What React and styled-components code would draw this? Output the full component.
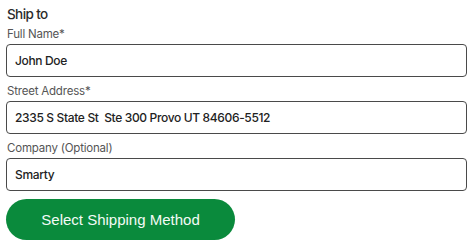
import React, { useState } from "react";
import styled, { createGlobalStyle } from "styled-components";

const GlobalStyle = createGlobalStyle`
    body {
        margin: 0;
        background: #fff;
        font-family: Inter, "Open Sans", sans-serif;
    }
`

const Form = styled.form`
    width: 474px;
    box-sizing: border-box;
    padding: 4px 7px 0 6px;
    display: flex;
    flex-direction: column;
`
const Heading = styled.div`
    font-size: 13.5px;
    line-height: 20px;
    height: 20px;
    color: #2b2b2b;
    font-weight: 500;
    letter-spacing: -0.6px;
    padding-left: 1px;
    margin-bottom: 3px;
`
const Field = styled.label`
    display: flex;
    flex-direction: column;
    gap: 3px;
    margin-bottom: 7px;
`
const LabelText = styled.span`
    font-size: 11.5px;
    line-height: 14px;
    color: #555;
    letter-spacing: -0.2px;
    padding-left: 1px;
`
const Input = styled.input`
    box-sizing: border-box;
    height: 33px;
    width: 100%;
    border: 1.5px solid #4a4a4a;
    border-radius: 4px;
    padding: 0 8px;
    font-family: Inter, "Open Sans", sans-serif;
    font-size: 12px;
    font-weight: 450;
    color: #222;
    letter-spacing: -0.35px;
    outline: none;
`
const Button = styled.button`
    margin-top: 1px;
    width: 229px;
    height: 41px;
    border: none;
    border-radius: 21px;
    background: #0a8a3c;
    color: #f4fbf6;
    font-family: "Liberation Sans", Arial, sans-serif;
    font-size: 15px;
    cursor: pointer;
`

const fields = [
    {key: 'name', label: 'Full Name*', value: 'John Doe'},
    {key: 'street', label: 'Street Address*', value: '2335 S State St  Ste 300 Provo UT 84606-5512'},
    {key: 'company', label: 'Company (Optional)', value: 'Smarty'},
]

const App = () => {
    const [values, setValues] = useState(
        Object.fromEntries(fields.map(f => [f.key, f.value]))
    );

    return (
        <>
            <GlobalStyle />
            <Form onSubmit={e => e.preventDefault()}>
                <Heading>Ship to</Heading>
                {fields.map(f => (
                    <Field key={f.key}>
                        <LabelText>{f.label}</LabelText>
                        <Input
                            value={values[f.key]}
                            onChange={e => setValues({...values, [f.key]: e.target.value})}
                        />
                    </Field>
                ))}
                <Button type="submit">Select Shipping Method</Button>
            </Form>
        </>
    )
}

export default App
